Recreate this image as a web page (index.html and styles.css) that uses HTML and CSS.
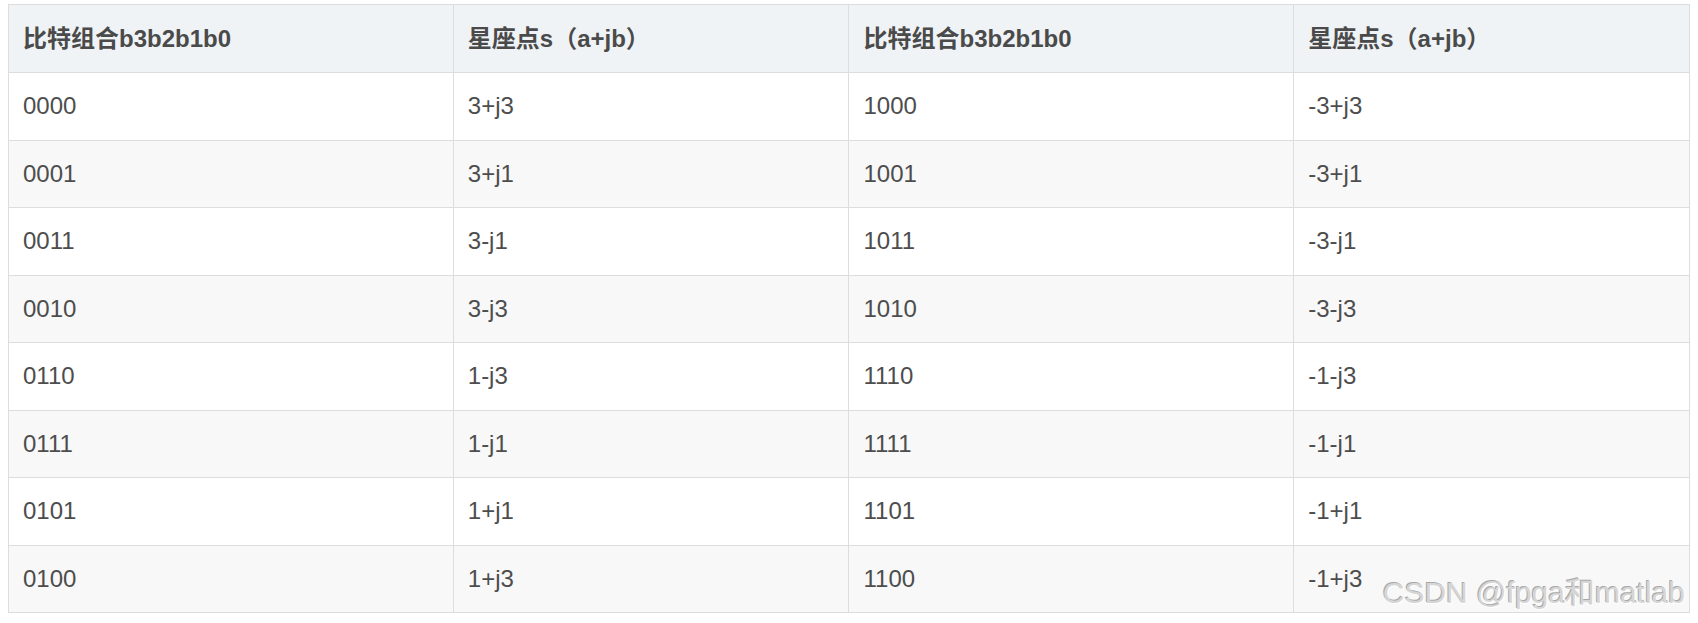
FILE: index.html
```html
<!DOCTYPE html>
<html lang="zh">
<head>
<meta charset="utf-8">
<title>16QAM</title>
<link rel="stylesheet" href="styles.css">
</head>
<body>
<div class="wrap">
<table class="tbl">
  <colgroup>
    <col class="c-wide"><col class="c-narrow"><col class="c-wide"><col class="c-narrow">
  </colgroup>
  <thead>
    <tr><th>比特组合b3b2b1b0</th><th>星座点s（a+jb）</th><th>比特组合b3b2b1b0</th><th>星座点s（a+jb）</th></tr>
  </thead>
  <tbody>
    <tr><td>0000</td><td>3+j3</td><td>1000</td><td>-3+j3</td></tr>
    <tr><td>0001</td><td>3+j1</td><td>1001</td><td>-3+j1</td></tr>
    <tr><td>0011</td><td>3-j1</td><td>1011</td><td>-3-j1</td></tr>
    <tr><td>0010</td><td>3-j3</td><td>1010</td><td>-3-j3</td></tr>
    <tr><td>0110</td><td>1-j3</td><td>1110</td><td>-1-j3</td></tr>
    <tr><td>0111</td><td>1-j1</td><td>1111</td><td>-1-j1</td></tr>
    <tr><td>0101</td><td>1+j1</td><td>1101</td><td>-1+j1</td></tr>
    <tr><td>0100</td><td>1+j3</td><td>1100</td><td>-1+j3</td></tr>
  </tbody>
</table>
<div class="mark">CSDN @fpga和matlab</div>
</div>
</body>
</html>
```
FILE: styles.css
```css
html, body {
  background: #ffffff;
}
body {
  margin: 4px 8px 0 8px;
  font-family: "Liberation Sans", Arial, "Noto Sans CJK SC", sans-serif;
  color: #4d4d4d;
}
.wrap {
  position: relative;
}
.tbl {
  width: 100%;
  border-collapse: collapse;
  table-layout: fixed;
  font-size: 24px;
}
.c-wide { width: 26.46%; }
.c-narrow { width: 23.54%; }
.tbl th,
.tbl td {
  border: 1px solid #dddddd;
  padding: 15.25px 14px;
  line-height: 36px;
  text-align: left;
  vertical-align: middle;
  white-space: nowrap;
}
.tbl th {
  background: #eff3f5;
  font-weight: bold;
  color: #4a4a4a;
  padding-top: 15.5px;
  padding-bottom: 15.5px;
}
.tbl tbody tr:nth-child(even) td {
  background: #f8f8f8;
}
.mark {
  position: absolute;
  right: 5px;
  bottom: 5px;
  font-size: 30px;
  line-height: 30px;
  font-weight: normal;
  font-family: "Liberation Sans", Arial, "Noto Sans CJK SC", sans-serif;
  color: #d6d6d6;
  text-shadow: -1px -1px 0 #a8a8a8, 1px 1px 0 #ffffff;
  white-space: nowrap;
}
```
